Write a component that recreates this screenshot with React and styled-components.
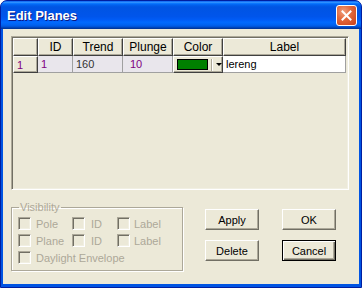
import React from "react";
import styled, { createGlobalStyle } from "styled-components";

const Global = createGlobalStyle`
  html, body { margin: 0; padding: 0; background: #ffffff; }
  body { font-family: "Liberation Sans", Arial, sans-serif; }
  * { box-sizing: border-box; }
`;

const Window = styled.div`
  width: 362px;
  height: 288px;
  display: flex;
  flex-direction: column;
  background: #0054e3;
  border: 1px solid #001ea0;
  border-radius: 7px 7px 0 0;
  overflow: hidden;
`;

const TitleBar = styled.div`
  height: 28px;
  flex: none;
  display: flex;
  align-items: center;
  justify-content: space-between;
  padding: 0 4px 0 6px;
  background: linear-gradient(
    #0058ee 0%, #3593ff 4%, #288eff 6%, #127dff 8%, #036ffc 10%,
    #0262ee 14%, #0057e5 20%, #0054e3 24%, #0055eb 56%, #005bf5 66%,
    #026afe 76%, #0062ef 86%, #0052d6 92%, #0040ab 96%, #003092 100%
  );
`;

const Title = styled.span`
  color: #ffffff;
  font: bold 13px "Liberation Sans", Arial, sans-serif;
  text-shadow: 1px 1px 0 #0a1883;
  letter-spacing: 0;
`;

const CloseButton = styled.div`
  width: 21px;
  height: 21px;
  border: 1px solid #ffffff;
  border-radius: 3px;
  background: radial-gradient(circle at 35% 30%, #f0a080 0%, #e36a3e 40%, #c8401a 100%);
  display: flex;
  align-items: center;
  justify-content: center;
`;

const Body = styled.div`
  flex: 1;
  margin: 0 2px 3px 2px;
  background: #ece9d8;
  display: flex;
  flex-direction: column;
  padding: 7px 10px 0 8px;
`;

const GridFrame = styled.div`
  width: 338px;
  height: 154px;
  border-top: 1px solid #aca899;
  border-left: 1px solid #aca899;
  border-right: 1px solid #ffffff;
  border-bottom: 1px solid #ffffff;
  box-shadow: inset 1px 1px 0 #716f64, inset -1px -1px 0 #f1efe2;
  padding: 1px;
  background: #ece9d8;
`;

const GridRow = styled.div`
  display: grid;
  grid-template-columns: 25px 35px 50px 50px 50px 123px;
  height: ${(p) => p.h}px;
`;

const HeadCell = styled.div`
  background: #ece9d8;
  border-top: 1px solid #ffffff;
  border-left: 1px solid #ffffff;
  border-right: 1px solid #404040;
  border-bottom: 1px solid #404040;
  box-shadow: inset -1px -1px 0 #aca899;
  display: flex;
  align-items: center;
  justify-content: ${(p) => (p.left ? "flex-start" : "center")};
  padding-left: ${(p) => (p.left ? 3 : 0)}px;
  font-size: ${(p) => (p.left ? 11 : 12)}px;
  color: ${(p) => p.color || "#000000"};
`;

const DataCell = styled.div`
  background: ${(p) => p.bg || "#e9e6ec"};
  border-right: 1px solid #a0a0a0;
  border-bottom: 1px solid #a0a0a0;
  display: flex;
  align-items: center;
  padding-left: ${(p) => p.pad}px;
  font-size: 11px;
  color: ${(p) => p.color || "#000000"};
`;

const ColorCell = styled.div`
  background: #ece9d8;
  border-top: 1px solid #ffffff;
  border-left: 1px solid #ffffff;
  border-right: 1px solid #404040;
  border-bottom: 1px solid #404040;
  box-shadow: inset -1px -1px 0 #aca899;
  display: flex;
  align-items: center;
  padding-left: 3px;
`;

const Swatch = styled.div`
  width: 32px;
  height: 11px;
  background: #008000;
  border: 1px solid #000000;
`;

const DropSep = styled.div`
  width: 2px;
  height: 12px;
  margin-left: 3px;
  border-left: 1px solid #aca899;
  border-right: 1px solid #ffffff;
`;

const DropArrow = styled.div`
  width: 0;
  height: 0;
  margin-left: 3px;
  border-left: 3px solid transparent;
  border-right: 3px solid transparent;
  border-top: 3px solid #000000;
`;

const BottomRow = styled.div`
  display: flex;
  align-items: flex-start;
  margin-top: 11px;
`;

const Group = styled.fieldset`
  margin: 0;
  width: 172px;
  padding: 3px 0 6px 6px;
  border: 1px solid #aca899;
  box-shadow: inset 1px 1px 0 #ffffff, 1px 1px 0 #ffffff;
  min-width: 0;
`;

const Legend = styled.legend`
  padding: 0 1px;
  margin-left: 1px;
  font-size: 11px;
  line-height: 13px;
  color: #aca899;
`;

const CheckGrid = styled.div`
  display: grid;
  grid-template-columns: 54px 45px auto;
  grid-auto-rows: 13px;
  row-gap: 4px;
`;

const CheckItem = styled.label`
  display: flex;
  align-items: center;
  font-size: 11px;
  color: #aca899;
  white-space: nowrap;
  grid-column: ${(p) => (p.span ? "1 / -1" : "auto")};
`;

const Box = styled.span`
  width: 13px;
  height: 13px;
  flex: none;
  border-top: 1px solid #aca899;
  border-left: 1px solid #aca899;
  border-right: 1px solid #ffffff;
  border-bottom: 1px solid #ffffff;
  box-shadow: inset 1px 1px 0 #716f64, inset -1px -1px 0 #f1efe2;
  background: #ece9d8;
  margin-right: ${(p) => p.gap}px;
`;

const Buttons = styled.div`
  display: grid;
  grid-template-columns: 54px 54px;
  grid-auto-rows: 21px;
  column-gap: 23px;
  row-gap: 10px;
  margin: 8px 0 0 22px;
`;

const Button = styled.button`
  font: 11px "Liberation Sans", Arial, sans-serif;
  color: #000000;
  background: #ece9d8;
  padding: 0;
  border-top: 1px solid #ffffff;
  border-left: 1px solid #ffffff;
  border-right: 1px solid #716f64;
  border-bottom: 1px solid #716f64;
  box-shadow: inset -1px -1px 0 #aca899;
  outline: ${(p) => (p.primary ? "1px solid #000000" : "none")};
  outline-offset: 0;
  ${(p) =>
    p.primary &&
    `border: 1px solid #000000;
     box-shadow: inset 1px 1px 0 #ffffff, inset -1px -1px 0 #716f64, inset -2px -2px 0 #aca899;
     outline: none;`}
`;

const Check = ({ label, gap = 5, span }) => (
  <CheckItem span={span}>
    <Box gap={gap} />
    {label}
  </CheckItem>
);

export default function App() {
  return (
    <>
      <Global />
      <Window>
        <TitleBar>
          <Title>Edit Planes</Title>
          <CloseButton>
            <svg width="11" height="11" viewBox="0 0 11 11">
              <path d="M1.5 1.5 L9.5 9.5 M9.5 1.5 L1.5 9.5" stroke="#ffffff" strokeWidth="2" strokeLinecap="square" />
            </svg>
          </CloseButton>
        </TitleBar>
        <Body>
          <GridFrame>
            <GridRow h={18}>
              <HeadCell />
              <HeadCell>ID</HeadCell>
              <HeadCell>Trend</HeadCell>
              <HeadCell>Plunge</HeadCell>
              <HeadCell>Color</HeadCell>
              <HeadCell>Label</HeadCell>
            </GridRow>
            <GridRow h={17}>
              <HeadCell left color="#800080">1</HeadCell>
              <DataCell pad={3} color="#800080">1</DataCell>
              <DataCell pad={3} color="#333333">160</DataCell>
              <DataCell pad={7} color="#800080">10</DataCell>
              <ColorCell>
                <Swatch />
                <DropSep />
                <DropArrow />
              </ColorCell>
              <DataCell pad={3} bg="#ffffff">lereng</DataCell>
            </GridRow>
          </GridFrame>
          <BottomRow>
            <Group>
              <Legend>Visibility</Legend>
              <CheckGrid>
                <Check label="Pole" />
                <Check label="ID" gap={6} />
                <Check label="Label" gap={4} />
                <Check label="Plane" />
                <Check label="ID" gap={6} />
                <Check label="Label" gap={4} />
                <Check label="Daylight Envelope" span />
              </CheckGrid>
            </Group>
            <Buttons>
              <Button>Apply</Button>
              <Button>OK</Button>
              <Button>Delete</Button>
              <Button primary>Cancel</Button>
            </Buttons>
          </BottomRow>
        </Body>
      </Window>
    </>
  );
}
